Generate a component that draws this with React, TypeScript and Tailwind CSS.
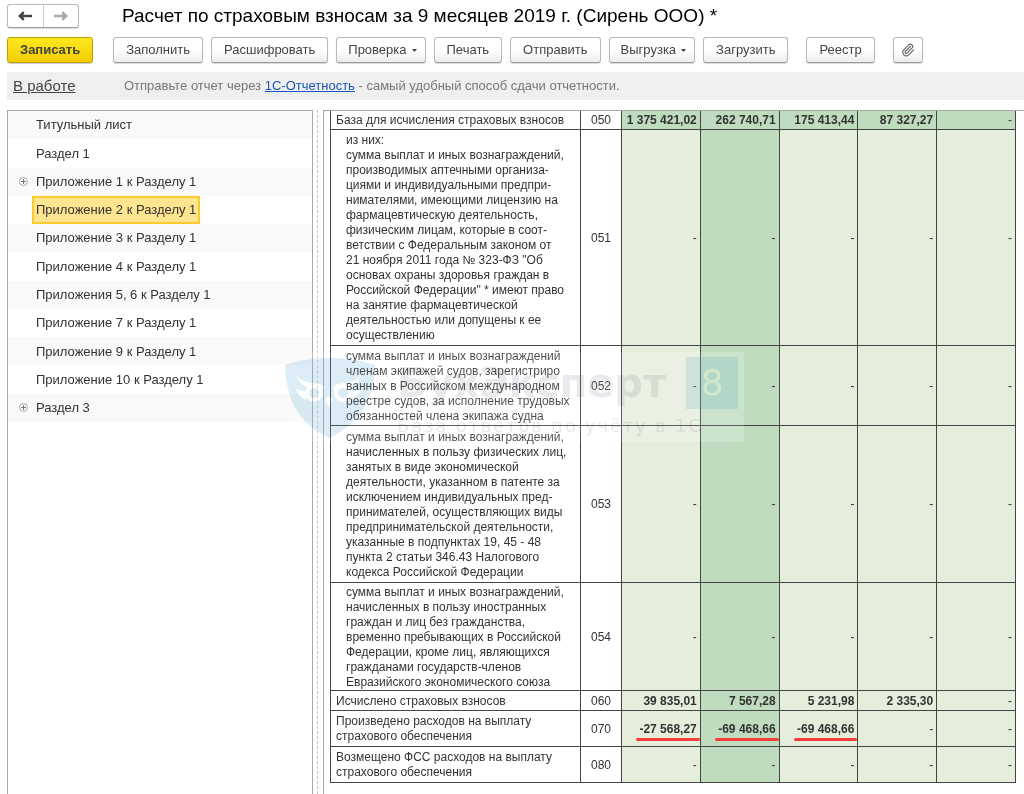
import type { ReactNode } from "react";
import { Paperclip } from "lucide-react";

const sections = [
  { title: "Титульный лист" },
  { title: "Раздел 1" },
  { title: "Приложение 1 к Разделу 1", group: true },
  { title: "Приложение 2 к Разделу 1", active: true },
  { title: "Приложение 3 к Разделу 1" },
  { title: "Приложение 4 к Разделу 1" },
  { title: "Приложения 5, 6 к Разделу 1" },
  { title: "Приложение 7 к Разделу 1" },
  { title: "Приложение 9 к Разделу 1" },
  { title: "Приложение 10 к Разделу 1" },
  { title: "Раздел 3", group: true },
];

const rows = [
  {
    code: "050",
    height: "h-[18px]",
    total: true,
    lines: ["База для исчисления страховых взносов"],
    values: ["1 375 421,02", "262 740,71", "175 413,44", "87 327,27", "-"],
  },
  {
    code: "051",
    height: "h-[216px]",
    nested: true,
    lines: [
      "из них:",
      "сумма выплат и иных вознаграждений,",
      "производимых аптечными организа-",
      "циями и индивидуальными предпри-",
      "нимателями, имеющими лицензию на",
      "фармацевтическую деятельность,",
      "физическим лицам, которые в соот-",
      "ветствии с Федеральным законом от",
      "21 ноября 2011 года № 323-ФЗ \"Об",
      "основах охраны здоровья граждан в",
      "Российской Федерации\" * имеют право",
      "на занятие фармацевтической",
      "деятельностью или допущены к ее",
      "осуществлению",
    ],
    values: ["-", "-", "-", "-", "-"],
  },
  {
    code: "052",
    height: "h-20",
    nested: true,
    lines: [
      "сумма выплат и иных вознаграждений",
      "членам экипажей судов, зарегистриро",
      "ванных в Российском международном",
      "реестре судов, за исполнение трудовых",
      "обязанностей члена экипажа судна",
    ],
    values: ["-", "-", "-", "-", "-"],
  },
  {
    code: "053",
    height: "h-[157px]",
    nested: true,
    lines: [
      "сумма выплат и иных вознаграждений,",
      "начисленных в пользу физических лиц,",
      "занятых в виде экономической",
      "деятельности, указанном в патенте за",
      "исключением индивидуальных пред-",
      "принимателей, осуществляющих виды",
      "предпринимательской деятельности,",
      "указанные в подпунктах 19, 45 - 48",
      "пункта 2 статьи 346.43 Налогового",
      "кодекса Российской Федерации",
    ],
    values: ["-", "-", "-", "-", "-"],
  },
  {
    code: "054",
    height: "h-[108px]",
    nested: true,
    lines: [
      "сумма выплат и иных вознаграждений,",
      "начисленных в пользу иностранных",
      "граждан и лиц без гражданства,",
      "временно пребывающих в Российской",
      "Федерации, кроме лиц, являющихся",
      "гражданами государств-членов",
      "Евразийского экономического союза",
    ],
    values: ["-", "-", "-", "-", "-"],
  },
  {
    code: "060",
    height: "h-5",
    lines: ["Исчислено страховых взносов"],
    values: ["39 835,01", "7 567,28", "5 231,98", "2 335,30", "-"],
  },
  {
    code: "070",
    height: "h-9",
    marked: true,
    lines: ["Произведено расходов на выплату", "страхового обеспечения"],
    values: ["-27 568,27", "-69 468,66", "-69 468,66", "-", "-"],
  },
  {
    code: "080",
    height: "h-9",
    lines: ["Возмещено ФСС расходов на выплату", "страхового обеспечения"],
    values: ["-", "-", "-", "-", "-"],
  },
];

const Arrow = ({ className }: { className: string }) => (
  <svg viewBox="0 0 14 10" className={className} fill="currentColor">
    <path d="M0 5 5 .3l1.5 1.4L5.2 3.8H14v2.4H5.2l1.3 2.1L5 9.7z" />
  </svg>
);

const ToolButton = ({ children, menu, className = "px-3" }: { children: ReactNode; menu?: boolean; className?: string }) => (
  <button
    className={`flex h-[26px] shrink-0 items-center rounded-[3px] border border-[#b9b9b9] border-b-[#9c9c9c] bg-linear-to-b from-white from-50% to-[#ececec] text-[13px] text-[#444] shadow-[0_1px_1px_rgba(0,0,0,0.15)] ${className}`}
  >
    {children}
    {menu && (
      <svg viewBox="0 0 5 3" className="ml-[5px] h-[3px] w-[5px]" fill="#444">
        <path d="M0 0h5L2.5 3z" />
      </svg>
    )}
  </button>
);

const Watermark = () => (
  <div className="pointer-events-none absolute top-[242px] left-[276px] flex h-[90px] w-[461px]" aria-hidden="true">
    <div className="absolute inset-0 bg-white/40 mix-blend-soft-light" />
    <svg viewBox="0 0 94 82" className="mt-[5px] h-[82px] w-[94px] shrink-0 mix-blend-multiply">
      <mask id="owl">
        <rect width="94" height="82" fill="#fff" />
        <g fill="none" stroke="#000" strokeWidth="4">
          <circle cx="31" cy="36" r="7" />
          <circle cx="60" cy="36" r="7" />
        </g>
        <path d="M13 18c4 6 12 8 24 9l5 4-3 2c-4-4-9-5-14-3-6-1-10-6-12-12zM13 32l10 3-1 3 2 5c-6-2-9-5-11-11z" />
        <path d="M78 18c-4 6-12 8-24 9l-5 4 3 2c4-4 9-5 14-3 6-1 10-6 12-12zM78 32l-10 3 1 3-2 5c6-2 9-5 11-11z" />
        <path d="m42 42 4-3 4 3-4 9z" />
      </mask>
      <path
        d="M2 8C17 3 31 1 46 1s31 2 46 7c-1 31-12 57-46 73C13 65 3 39 2 8z"
        fill="#dcedf7"
        mask="url(#owl)"
      />
    </svg>
    <div className="ml-5 flex flex-col font-['DejaVu_Sans'] text-[#555577]/12">
      <div className="flex h-[62px] items-center gap-5">
        <span className="text-[40px] leading-none font-bold mix-blend-multiply">БухЭксперт</span>
        <span className="flex h-[52px] w-[52px] items-center justify-center bg-[#2f93a8]/20 text-[36px] leading-none text-[#d5ebc4]/70">
          8
        </span>
      </div>
      <span className="text-lg leading-6 tracking-widest whitespace-nowrap mix-blend-multiply">
        База ответов по учёту в 1С
      </span>
    </div>
  </div>
);

const ReportTable = () => (
  <table className="ml-[6px] w-[686px] table-fixed border-collapse text-xs leading-[15px] text-[#333]">
    <colgroup>
      <col className="w-[250px]" />
      <col className="w-[41px]" />
      <col />
      <col />
      <col />
      <col />
      <col />
    </colgroup>
    <tbody>
      {rows.map((row, index) => (
        <tr key={row.code} className={row.height}>
          <th
            scope="row"
            className={`border border-[#444] pt-[2px] pb-0 text-left font-normal whitespace-pre ${index === 0 ? "border-t-0" : ""} ${row.nested ? "pl-[15px]" : "pl-[5px]"}`}
          >
            {row.lines.join("\n")}
          </th>
          <td className={`border border-[#444] px-0 pt-[2px] pb-0 text-center ${index === 0 ? "border-t-0" : ""}`}>
            {row.code}
          </td>
          {row.values.map((value, column) => (
            <td
              key={column}
              className={`border border-[#444] pt-[2px] pr-[3px] pb-0 pl-0 text-right whitespace-nowrap ${index === 0 ? "border-t-0" : ""} ${row.total || column === 1 ? "bg-[#bfdcbf]" : "bg-[#e5eedb]"} ${value === "-" ? "" : "font-bold"}`}
            >
              {row.marked && value !== "-" ? (
                <span className="relative inline-block">
                  {value}
                  <span className="absolute -right-[3px] -bottom-1 -left-[3px] h-[3px] rounded-full bg-[#f83b3b]" />
                </span>
              ) : (
                value
              )}
            </td>
          ))}
        </tr>
      ))}
    </tbody>
  </table>
);

const App = () => {
  return (
    <div className="flex min-h-screen flex-col overflow-x-hidden bg-white pl-[7px] font-['Liberation_Sans',Arial,sans-serif] text-[#333]">
      <header className="flex h-8 items-center">
        <div className="flex h-6 w-[72px] shrink-0 rounded-[3px] border border-[#b9b9b9] border-b-[#9c9c9c] shadow-[0_1px_1px_rgba(0,0,0,0.15)]">
          <button className="flex flex-1 items-center justify-center border-r border-[#ccc] text-[#444]" aria-label="Назад">
            <Arrow className="h-[10px] w-[14px]" />
          </button>
          <button className="flex flex-1 items-center justify-center text-[#aaa]" aria-label="Вперед">
            <Arrow className="h-[10px] w-[14px] rotate-180" />
          </button>
        </div>
        <h1 className="ml-[43px] text-[19px] whitespace-nowrap text-black">
          Расчет по страховым взносам за 9 месяцев 2019 г. (Сирень ООО) *
        </h1>
      </header>

      <div className="flex items-center gap-2 pt-[5px]">
        <button className="mr-3 flex h-[26px] shrink-0 items-center rounded-[3px] border border-[#b9a000] bg-linear-to-b from-[#ffe81f] to-[#f2cd00] px-3 text-[13px] font-bold text-[#444] shadow-[0_1px_1px_rgba(0,0,0,0.2)]">
          Записать
        </button>
        <ToolButton>Заполнить</ToolButton>
        <ToolButton>Расшифровать</ToolButton>
        <ToolButton menu className="pr-2 pl-[11px]">
          Проверка
        </ToolButton>
        <ToolButton>Печать</ToolButton>
        <ToolButton>Отправить</ToolButton>
        <ToolButton menu className="pr-2 pl-[11px]">
          Выгрузка
        </ToolButton>
        <ToolButton>Загрузить</ToolButton>
        <ToolButton className="ml-[10px] px-3">Реестр</ToolButton>
        <ToolButton className="ml-[10px] px-[7px]">
          <Paperclip className="h-[14px] w-[14px] text-[#666]" strokeWidth={2} aria-label="Файлы" />
        </ToolButton>
      </div>

      <div className="mt-[9px] flex h-7 items-center bg-[#efefef] pl-[6px]">
        <a href="#status" className="w-[111px] shrink-0 text-[15px] text-[#444] underline">
          В работе
        </a>
        <p className="text-[13px] whitespace-nowrap text-[#777]">
          Отправьте отчет через{" "}
          <a href="#reporting" className="text-[#1a55b8] underline">
            1С-Отчетность
          </a>{" "}
          - самый удобный способ сдачи отчетности.
        </p>
      </div>

      <main className="relative mt-[10px] flex flex-1">
        <nav className="w-[306px] shrink-0 border border-b-0 border-[#a8a8a8]">
          <ul className="grid h-[311px] auto-rows-fr text-[13px]">
            {sections.map((section) => (
              <li key={section.title} className="flex items-center odd:bg-[#f9f9f9]">
                <span className="flex w-6 justify-end pr-1">
                  {section.group && (
                    <svg viewBox="0 0 9 9" className="h-[9px] w-[9px]" fill="none" stroke="#aaa">
                      <circle cx="4.5" cy="4.5" r="4" />
                      <path d="M2 4.5h5M4.5 2v5" stroke="#777" />
                    </svg>
                  )}
                </span>
                <a
                  href="#section"
                  className={`flex h-full items-center border-2 px-[2px] ${section.active ? "border-[#fcca2c] bg-[#ffe58f]" : "border-transparent"}`}
                >
                  {section.title}
                </a>
              </li>
            ))}
          </ul>
        </nav>
        <div className="ml-1 w-0 border-l border-dashed border-[#c4c4c4]" />
        <section className="ml-[5px] min-w-0 flex-1 border-t border-l border-[#a8a8a8]">
          <ReportTable />
        </section>
        <Watermark />
      </main>
    </div>
  );
};

export default App;
